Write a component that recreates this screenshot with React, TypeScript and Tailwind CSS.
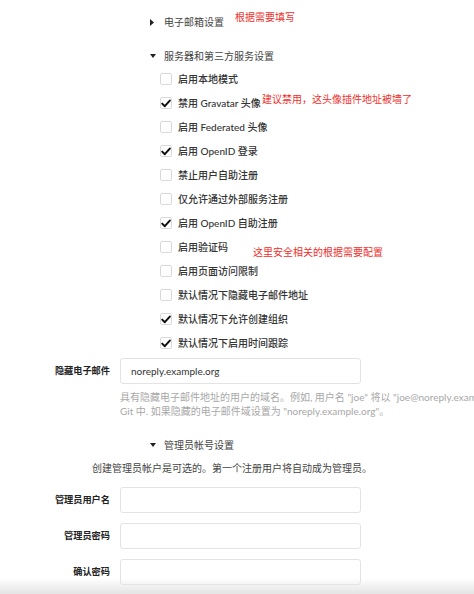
import React from "react";

const font = { fontFamily: '"Lato", "Noto Sans CJK SC", "Noto Sans", sans-serif' };

function Check({ checked, label }: { checked: boolean; label: string }) {
  return (
    <div className="flex h-[24px] items-center">
      <div className="ml-[160px] flex h-[12px] w-[12px] items-center justify-center rounded-[2px] border border-[#d9d9db] bg-white">
        {checked && (
          <svg width="10" height="9" viewBox="0 0 10 9">
            <path d="M1.2 4.6 L3.8 7.2 L8.8 1.6" fill="none" stroke="#111" strokeWidth="2" strokeLinecap="round" strokeLinejoin="round" />
          </svg>
        )}
      </div>
      <span className="ml-[6px] text-[10px] font-medium text-[#333]">{label}</span>
    </div>
  );
}

function Heading({ open, label }: { open: boolean; label: string }) {
  return (
    <div className="flex h-[20px] items-center">
      <div className="ml-[150px] flex w-[14px] items-center">
        {open ? (
          <svg width="6" height="4" viewBox="0 0 6 4">
            <path d="M0 0 L6 0 L3 4 Z" fill="#222" />
          </svg>
        ) : (
          <svg width="4" height="7" viewBox="0 0 4 7">
            <path d="M0 0 L4 3.5 L0 7 Z" fill="#222" />
          </svg>
        )}
      </div>
      <span className="text-[10px] text-[#444]">{label}</span>
    </div>
  );
}

function Field({ label, value }: { label: string; value?: string }) {
  return (
    <div className="flex items-center">
      <div className="w-[110px] text-right text-[9.2px] font-bold text-[#222]">{label}</div>
      <div className="ml-[10px] flex h-[26px] w-[241px] items-center rounded-[3px] border border-[#e3e3e3] bg-white px-[10px] text-[10px] text-[#333]">
        {value}
      </div>
    </div>
  );
}

export default function App() {
  const checks: [boolean, string][] = [
    [false, "启用本地模式"],
    [true, "禁用 Gravatar 头像"],
    [false, "启用 Federated 头像"],
    [true, "启用 OpenID 登录"],
    [false, "禁止用户自助注册"],
    [false, "仅允许通过外部服务注册"],
    [true, "启用 OpenID 自助注册"],
    [false, "启用验证码"],
    [false, "启用页面访问限制"],
    [false, "默认情况下隐藏电子邮件地址"],
    [true, "默认情况下允许创建组织"],
    [true, "默认情况下启用时间跟踪"],
  ];
  return (
    <div className="relative h-[594px] w-[474px] overflow-hidden bg-white" style={font}>
      <div className="flex flex-col pt-[12px]">
        <Heading open={false} label="电子邮箱设置" />
        <div className="mt-[14px]">
          <Heading open={true} label="服务器和第三方服务设置" />
        </div>
        <div className="mt-[1px] flex flex-col">
          {checks.map(([c, l]) => (
            <Check key={l} checked={c} label={l} />
          ))}
        </div>
        <div className="mt-[3px]">
          <Field label="隐藏电子邮件" value="noreply.example.org" />
        </div>
        <div className="ml-[120px] mt-[6px] whitespace-nowrap text-[10px] leading-[14px] text-[#a8a8a8]">
          具有隐藏电子邮件地址的用户的域名。例如, 用户名 "joe" 将以 "joe@noreply.example.org" 的身份登录到
          <br />
          Git 中. 如果隐藏的电子邮件域设置为 "noreply.example.org"。
        </div>
        <div className="mt-[17px]">
          <Heading open={true} label="管理员帐号设置" />
        </div>
        <div className="ml-[92px] mt-[6px] text-[10px] leading-[14px] text-[#444]">
          创建管理员帐户是可选的。第一个注册用户将自动成为管理员。
        </div>
        <div className="mt-[12px] flex flex-col gap-[10px]">
          <Field label="管理员用户名" />
          <Field label="管理员密码" />
          <Field label="确认密码" />
        </div>
      </div>

      <div className="pointer-events-none absolute left-[235px] top-[10px] text-[10px] text-[#ec2f2c]">根据需要填写</div>
      <div className="pointer-events-none absolute left-[262px] top-[92px] text-[10px] text-[#ec2f2c]">建议禁用，这头像插件地址被墙了</div>
      <div className="pointer-events-none absolute left-[253px] top-[245px] text-[10px] text-[#ec2f2c]">这里安全相关的根据需要配置</div>

      <div className="pointer-events-none absolute bottom-0 left-0 h-[16px] w-full bg-gradient-to-b from-transparent to-[#e4e4e4]" />
    </div>
  );
}
